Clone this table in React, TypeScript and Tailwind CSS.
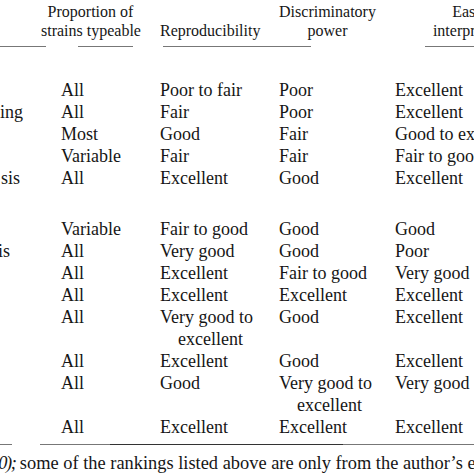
type Cell = string | string[];

const rows: { label?: string; labelClass?: string; cells: Cell[]; gapBefore?: boolean }[] = [
  { cells: ["All", "Poor to fair", "Poor", "Excellent"] },
  { label: "ing", cells: ["All", "Fair", "Poor", "Excellent"] },
  { cells: ["Most", "Good", "Fair", "Good to excellent"] },
  { cells: ["Variable", "Fair", "Fair", "Fair to good"] },
  { label: "sis", labelClass: "ml-[1px]", cells: ["All", "Excellent", "Good", "Excellent"] },
  { gapBefore: true, cells: ["Variable", "Fair to good", "Good", "Good"] },
  { label: "is", labelClass: "-ml-[2px]", cells: ["All", "Very good", "Good", "Poor"] },
  { cells: ["All", "Excellent", "Fair to good", "Very good"] },
  { cells: ["All", "Excellent", "Excellent", "Excellent"] },
  { cells: ["All", ["Very good to", "excellent"], "Good", "Excellent"] },
  { cells: ["All", "Excellent", "Good", "Excellent"] },
  { cells: ["All", "Good", ["Very good to", "excellent"], "Very good"] },
  { cells: ["All", "Excellent", "Excellent", "Excellent"] },
];

function CellText({ value }: { value: Cell }) {
  if (Array.isArray(value)) {
    return (
      <div>
        <div>{value[0]}</div>
        <div className="pl-[18px]">{value[1]}</div>
      </div>
    );
  }
  return <div>{value}</div>;
}

export default function App() {
  return (
    <div
      className="w-[474px] h-[474px] overflow-hidden bg-white text-[#161616]"
      style={{ fontFamily: '"Liberation Serif", "Times New Roman", serif' }}
    >
      {/* column headings */}
      <div className="flex items-end pt-[1.5px] text-[16px] leading-[19px] whitespace-nowrap">
        <div className="w-[41px] shrink-0" />
        <div className="w-[99px] shrink-0 text-center">
          <div>Proportion of</div>
          <div>strains typeable</div>
        </div>
        <div className="w-[100px] shrink-0 ml-[20px]">Reproducibility</div>
        <div className="w-[97px] shrink-0 ml-[19px] text-center">
          <div>Discriminatory</div>
          <div>power</div>
        </div>
        <div className="w-[102px] shrink-0 ml-[49px] text-center">
          <div>Ease of</div>
          <div>interpretation</div>
        </div>
      </div>

      {/* heading rules */}
      <div className="flex mt-[6px] h-px">
        <div className="w-[46px] bg-[#777]" />
        <div className="w-[55px] ml-[32px] bg-[#777]" />
        <div className="w-[148px] ml-[30px] bg-[#777]" />
        <div className="flex-1 ml-[114px] bg-[#777]" />
      </div>

      {/* body */}
      <div className="mt-[32.5px] text-[18px] leading-[22px] whitespace-nowrap">
        {rows.map((row, i) => (
          <div
            key={i}
            className={`grid grid-cols-[61px_99px_119px_116px_1fr] ${row.gapBefore ? "mt-[29px]" : ""}`}
          >
            <div className={row.labelClass}>{row.label ?? ""}</div>
            {row.cells.map((c, j) => (
              <CellText key={j} value={c} />
            ))}
          </div>
        ))}
      </div>

      {/* bottom rule */}
      <div className="flex items-center mt-[5.5px] h-[2px]">
        <div className="w-[12px] h-px bg-[#777]" />
        <div className="w-[70px] ml-[28px] h-px bg-[#777]" />
        <div className="w-[233px] h-[1.5px] bg-[#333]" />
        <div className="flex-1 h-px bg-[#777]" />
      </div>

      {/* footnote */}
      <div className="mt-[6px] text-[18.4px] leading-[22px] whitespace-nowrap -ml-[14px]">
        <span className="italic tracking-[-1.5px]">(20);</span> some of the rankings listed above are only from the author’s experience
      </div>
    </div>
  );
}
